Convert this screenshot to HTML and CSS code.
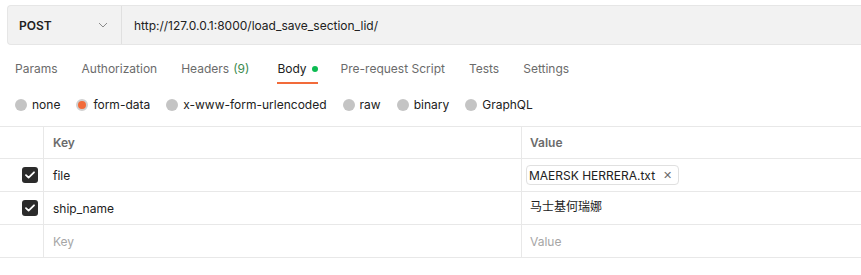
FILE: index.html
```html
<!DOCTYPE html>
<html lang="en">
<head>
  <meta charset="UTF-8">
  <title>Request</title>
  <link rel="stylesheet" href="styles.css">
</head>
<body>
  <!-- Request URL bar -->
  <div class="url-bar">
    <div class="method">
      <span>POST</span>
      <svg class="chevron" width="10" height="6" viewBox="0 0 10 6"><path d="M1 1l4 4 4-4" fill="none" stroke="#8a8a8a" stroke-width="1"/></svg>
    </div>
    <div class="url">http://127.0.0.1:8000/load_save_section_lid/</div>
  </div>

  <!-- Request tabs -->
  <div class="tabs">
    <div class="tab">Params</div>
    <div class="tab">Authorization</div>
    <div class="tab">Headers <span class="count">(9)</span></div>
    <div class="tab active">Body <span class="dot"></span></div>
    <div class="tab">Pre-request Script</div>
    <div class="tab">Tests</div>
    <div class="tab">Settings</div>
  </div>

  <!-- Body types -->
  <div class="body-types">
    <label class="radio"><span class="circle"></span>none</label>
    <label class="radio"><span class="circle selected"></span>form-data</label>
    <label class="radio"><span class="circle"></span>x-www-form-urlencoded</label>
    <label class="radio"><span class="circle"></span>raw</label>
    <label class="radio"><span class="circle"></span>binary</label>
    <label class="radio"><span class="circle"></span>GraphQL</label>
  </div>

  <!-- Form data table -->
  <div class="kv-table">
    <div class="cell check head"></div>
    <div class="cell head">Key</div>
    <div class="cell head">Value</div>

    <div class="cell check"><span class="checkbox"><svg width="10" height="8" viewBox="0 0 10 8"><path d="M1 4.2l2.6 2.4L9 1.3" fill="none" stroke="#fff" stroke-width="1.8" stroke-linecap="round" stroke-linejoin="round"/></svg></span></div>
    <div class="cell">file</div>
    <div class="cell"><span class="file-chip">MAERSK HERRERA.txt <span class="close">&#x2715;</span></span></div>

    <div class="cell check"><span class="checkbox"><svg width="10" height="8" viewBox="0 0 10 8"><path d="M1 4.2l2.6 2.4L9 1.3" fill="none" stroke="#fff" stroke-width="1.8" stroke-linecap="round" stroke-linejoin="round"/></svg></span></div>
    <div class="cell">ship_name</div>
    <div class="cell cjk">马士基何瑞娜</div>

    <div class="cell check"></div>
    <div class="cell placeholder">Key</div>
    <div class="cell placeholder">Value</div>
  </div>
</body>
</html>
```

FILE: styles.css
```css
body {
  margin: 0;
  padding: 0;
  background-color: #ffffff;
  font-family: 'Inter', 'Noto Sans CJK SC', sans-serif;
  font-size: 12px;
  color: #212121;
}

.url-bar {
  display: flex;
  height: 38px;
  margin: 5px 0 0 7px;
  background-color: #f2f2f2;
  border: 1px solid #e6e6e6;
  border-right: none;
  border-radius: 4px 0 0 4px;
}

.method {
  display: flex;
  align-items: center;
  justify-content: space-between;
  width: 114px;
  padding: 0 13px 0 11px;
  box-sizing: border-box;
  border-right: 1px solid #e0e0e0;
  font-weight: 600;
  font-size: 12px;
}

.url {
  display: flex;
  align-items: center;
  padding-left: 12px;
  color: #212121;
}

.tabs {
  display: flex;
  gap: 24px;
  margin-top: 11px;
  padding-left: 15px;
}

.tab {
  display: flex;
  align-items: center;
  gap: 5px;
  padding: 4px 0;
  line-height: 18px;
  color: #6b6b6b;
  border-bottom: 2px solid transparent;
}

.tab .count {
  color: #3b8a4e;
  margin-left: -1px;
}

.tab.active {
  margin: 0 -1px 0 4px;
  color: #212121;
  border-bottom-color: #f26b3a;
}

.dot {
  width: 6px;
  height: 6px;
  border-radius: 50%;
  background-color: #0cbb52;
}

.body-types {
  display: flex;
  gap: 16px;
  margin-top: 12px;
  padding-left: 15px;
  line-height: 18px;
}

.radio {
  display: flex;
  align-items: center;
  gap: 5px;
  color: #212121;
}

.circle {
  width: 12px;
  height: 12px;
  border-radius: 50%;
  background-color: #c4c4c4;
  box-sizing: border-box;
}

.circle.selected {
  background-color: #f26b3a;
  border: 2px solid #d0d0d0;
}

.kv-table {
  display: grid;
  grid-template-columns: 44px 478px 1fr;
  margin-top: 12px;
  border-top: 1px solid #e8e8e8;
}

.cell {
  display: flex;
  align-items: center;
  height: 32px;
  padding-left: 9px;
  border-bottom: 1px solid #e8e8e8;
  border-right: 1px solid #e8e8e8;
}

.cell:nth-child(3n) {
  border-right: none;
  padding-left: 8px;
}

.cell.head {
  height: 31px;
  font-weight: 600;
  color: #6b6b6b;
}

.cell.check {
  justify-content: flex-end;
  padding: 0 5px 0 0;
}

.cell.cjk {
  align-items: flex-start;
  height: 27px;
  padding-top: 5px;
  line-height: 20px;
}

.checkbox {
  display: flex;
  align-items: center;
  justify-content: center;
  width: 16px;
  height: 16px;
  border-radius: 3px;
  background-color: #2b2b2b;
}

.file-chip {
  display: inline-flex;
  align-items: center;
  height: 18px;
  margin-left: -4px;
  padding: 0 6px 0 2px;
  border: 1px solid #e0e0e0;
  border-radius: 4px;
}

.file-chip .close {
  margin-left: 8px;
  font-size: 11px;
  color: #6b6b6b;
}

.placeholder {
  color: #a6a6a6;
}
```
